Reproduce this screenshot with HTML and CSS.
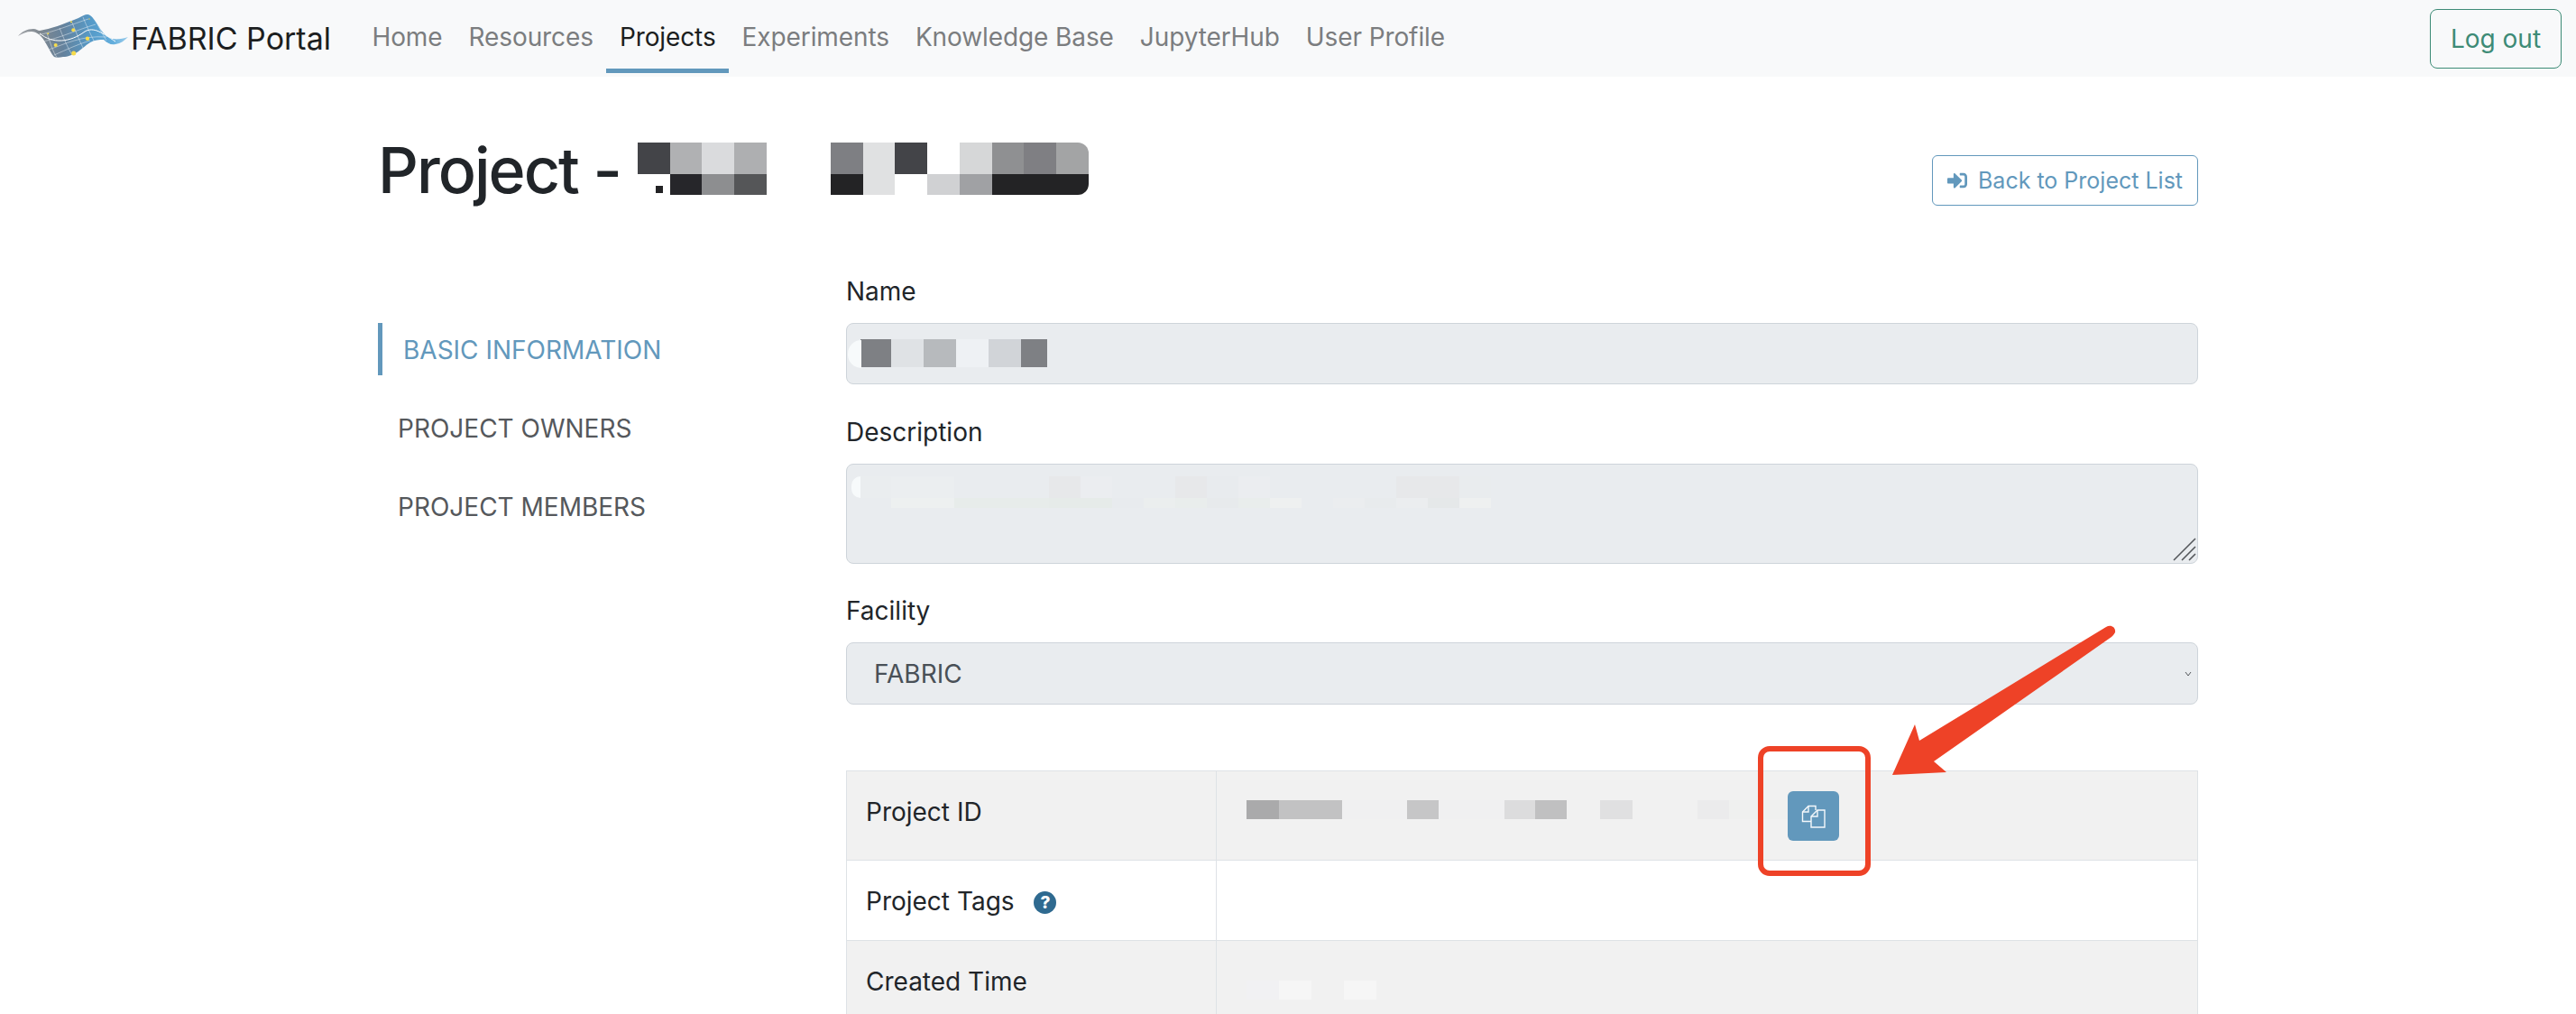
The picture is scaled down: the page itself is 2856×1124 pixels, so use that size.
FILE: index.html
```html
<!DOCTYPE html>
<html lang="en">
  <head>
    <meta charset="UTF-8" />
    <meta name="viewport" content="width=device-width, initial-scale=1.0" />
    <title>FABRIC Portal</title>
    <link rel="stylesheet" href="styles.css">
  </head>
  <body>
    <nav class="navbar">
      <a class="brand" href="#">
        <svg class="logo" viewBox="0 0 124 52" width="124" height="52">
          <defs>
            <linearGradient id="wave" x1="0" y1="0" x2="1" y2="0">
              <stop offset="0" stop-color="#a3a6aa" />
              <stop offset="0.2" stop-color="#7f8890" />
              <stop offset="0.4" stop-color="#65829c" />
              <stop offset="0.65" stop-color="#559ac8" />
              <stop offset="0.85" stop-color="#62aedd" />
              <stop offset="1" stop-color="#a5d2ee" />
            </linearGradient>
            <clipPath id="waveClip">
              <path d="M0 25C4 20 10 17 17 17C20 17 22 19 24 19C36 17 50 12 67 5C71 3 74 1 77 1C81 1 84 6 88 12C92 19 97 26 104 28C110 29 116 28 122 26C118 30 114 33 108 34C103 35 99 33 95 29C90 29 85 29 80 32C74 36 71 39 67 42C60 46 55 48 50 48C46 49 42 49 40 48C37 45 35 40 32 35C29 30 27 26 23 23C20 21 18 20 15 20C9 20 5 22 0 25Z" />
            </clipPath>
          </defs>
          <g clip-path="url(#waveClip)">
            <rect width="124" height="52" fill="url(#wave)" />
            <g fill="none" stroke="#e6eff5" stroke-width="0.5">
              <path d="M22 24C40 20 60 12 78 6" />
              <path d="M28 31C46 27 66 18 86 12" />
              <path d="M34 40C52 34 70 24 98 26" />
              <path d="M40 46C54 40 66 34 80 30" />
              <path d="M32 22C36 32 38 42 44 50" />
              <path d="M46 16C50 26 54 36 60 46" />
              <path d="M60 10C64 20 68 30 72 38" />
              <path d="M72 4C76 14 80 22 84 30" />
              <path d="M84 4C88 12 92 20 98 30" />
            </g>
            <path d="M24 22C38 34 58 32 74 20C84 14 94 22 108 31" fill="none" stroke="#fff" stroke-width="1" />
          </g>
          <g fill="#f6dc4c">
            <circle cx="61.700" cy="44" r="2.500" />
            <circle cx="77" cy="27.700" r="2.200" />
            <circle cx="41.700" cy="35" r="2" />
            <circle cx="61.300" cy="18.300" r="2" />
            <circle cx="33.300" cy="22.300" r="1" />
            <circle cx="59" cy="9.300" r="1" />
            <circle cx="79" cy="6" r="0.700" />
          </g>
        </svg>
        <span>FABRIC Portal</span>
      </a>
      <ul class="nav-links">
        <li><a href="#">Home</a></li>
        <li><a href="#">Resources</a></li>
        <li class="active"><a href="#">Projects</a></li>
        <li><a href="#">Experiments</a></li>
        <li><a href="#">Knowledge Base</a></li>
        <li><a href="#">JupyterHub</a></li>
        <li><a href="#">User Profile</a></li>
      </ul>
      <button class="btn-logout">Log out</button>
    </nav>

    <div class="container">
      <div class="page-header">
        <h1>Project -
          <span class="mosaic mosaic-title">
            <i style="background:#434448"></i><i style="background:#b0b1b3"></i><i style="background:#dadbdd"></i><i style="background:#aeafb1"></i><i class="c-white"></i><i class="c-white"></i><i style="background:#7e7f83"></i><i style="background:#e0e1e2"></i><i style="background:#434448"></i><i class="c-white"></i><i style="background:#d6d7d8"></i><i style="background:#8f9092"></i><i style="background:#7f7f83"></i><i style="background:#a3a4a5"></i>
            <i class="c-white c-dot"></i><i style="background:#26262a"></i><i style="background:#8d8e90"></i><i style="background:#555658"></i><i class="c-white"></i><i class="c-white"></i><i style="background:#232325"></i><i style="background:#e0e1e2"></i><i class="c-white"></i><i style="background:#d0d1d3"></i><i style="background:#a0a1a4"></i><i style="background:#232325"></i><i style="background:#232325"></i><i style="background:#232325"></i>
          </span>
        </h1>
        <button class="btn-back">
          <svg viewBox="0 0 512 512" width="22" height="22" fill="currentColor"><path d="M416 448h-84c-6.6 0-12-5.4-12-12v-40c0-6.6 5.4-12 12-12h84c17.7 0 32-14.3 32-32V160c0-17.7-14.3-32-32-32h-84c-6.6 0-12-5.4-12-12V76c0-6.6 5.4-12 12-12h84c53 0 96 43 96 96v192c0 53-43 96-96 96zm-47-201L201 79c-15-15-41-4.500-41 17v96H24c-13.300 0-24 10.700-24 24v96c0 13.300 10.700 24 24 24h136v96c0 21.500 26 32 41 17l168-168c9.300-9.400 9.300-24.600 0-34z"/></svg>
          Back to Project List
        </button>
      </div>

      <div class="project-layout">
        <ul class="side-menu">
          <li class="active">BASIC INFORMATION</li>
          <li>PROJECT OWNERS</li>
          <li>PROJECT MEMBERS</li>
        </ul>

        <div class="project-form">
          <div class="form-group">
            <label>Name</label>
            <div class="field field-name">
              <span class="mosaic mosaic-name">
                <i style="background:#7e8084"></i><i style="background:#dfe2e5"></i><i style="background:#b7babd"></i><i style="background:#eef1f4"></i><i style="background:#d1d4d8"></i><i style="background:#7e8084"></i>
              </span>
            </div>
          </div>
          <div class="form-group">
            <label>Description</label>
            <div class="field field-desc">
              <span class="mosaic mosaic-desc">
                <i style="background:#eaedef"></i><i style="background:#ebeef0"></i><i style="background:#ebeef0"></i><i></i><i></i><i></i><i style="background:#e7e8ea"></i><i style="background:#ebedf0"></i><i></i><i></i><i style="background:#e7e8ea"></i><i style="background:#e8ebee"></i><i style="background:#ebedf0"></i><i></i><i></i><i></i><i></i><i style="background:#e7e8ea"></i><i style="background:#e7e8ea"></i><i style="background:#e9ecee"></i>
                <i></i><i style="background:#edf0f0"></i><i style="background:#edf0f0"></i><i style="background:#e7ecea"></i><i style="background:#e7ecea"></i><i style="background:#e7ecea"></i><i style="background:#e6ebe9"></i><i style="background:#e6ebe9"></i><i style="background:#e8ebee"></i><i style="background:#ebeeee"></i><i style="background:#e9edec"></i><i style="background:#e7eaec"></i><i style="background:#e9edec"></i><i style="background:#eef0f0"></i><i></i><i style="background:#ebedef"></i><i style="background:#e8ebed"></i><i style="background:#ebedef"></i><i style="background:#e5e8e9"></i><i style="background:#eef0f0"></i>
              </span>
              <svg class="resize-handle" viewBox="0 0 26 26" width="26" height="26" fill="none" stroke="#55585c" stroke-width="1.600">
                <path d="M1 25L25 1M10 25L25 10M18 25L25 18" />
              </svg>
            </div>
          </div>
          <div class="form-group">
            <label>Facility</label>
            <div class="field field-select">
              <span>FABRIC</span>
              <svg viewBox="0 0 8 6" width="8" height="6" fill="none" stroke="#55585c" stroke-width="1"><path d="M1 1L4 5L7 1" /></svg>
            </div>
          </div>

          <table class="info-table">
            <tbody>
              <tr class="row-id">
                <th>Project ID</th>
                <td>
                  <div class="id-cell">
                    <span class="mosaic mosaic-id">
                      <i style="width:36px;background:#aaaaab"></i><i style="width:70px;background:#c2c2c3"></i><i style="width:72px;background:#f0f0f1"></i><i style="width:35px;background:#c6c6c7"></i><i style="width:73px;background:#f0f0f1"></i><i style="width:34px;background:#dcdcdd"></i><i style="width:35px;background:#c0c0c1"></i><i style="width:37px"></i><i style="width:36px;background:#e0e0e1"></i><i style="width:72px"></i><i style="width:35px;background:#ebebec"></i><i style="width:65px;background:#eff0ef"></i>
                    </span>
                    <button class="btn-copy">
                      <svg viewBox="0 0 57 55" width="57" height="55" fill="none" stroke="#f4f8fb" stroke-width="1.400">
                        <path d="M31 21V16.500H23L16.500 23V33.500H26" />
                        <path d="M23 16.500V23H16.500" />
                        <path d="M26 28L33 21H41V40H26Z" />
                        <path d="M33 21V28H26" />
                      </svg>
                    </button>
                  </div>
                </td>
              </tr>
              <tr>
                <th>Project Tags <span class="help-icon">?</span></th>
                <td></td>
              </tr>
              <tr>
                <th>Created Time</th>
                <td>
                  <span class="mosaic mosaic-time">
                    <i style="background:#f1f1f3"></i><i style="background:#f6f6f6"></i><i></i><i style="background:#f6f6f6"></i>
                  </span>
                </td>
              </tr>
            </tbody>
          </table>
        </div>
      </div>
    </div>

    <!-- red markup drawn over the screenshot -->
    <div class="callout-box"></div>
    <svg class="callout-arrow" viewBox="0 0 260 180" width="260" height="180">
      <path d="M8 176L33 120L38 138L245 12C250 9 256 12 255 18C254 20 253 21 251 23L54 161L68 173Z" fill="#ee4227" />
    </svg>
  </body>
</html>
```

FILE: styles.css
```css
html {
  overflow: hidden;
  height: 100%;
}
body {
  font-family: Inter, "Noto Sans", sans-serif;
  font-size: 28px;
  line-height: 42px;
  color: #212529;
  background-color: #fff;
  margin: 0;
  padding: 0;
}
ul {
  list-style: none;
  margin: 0;
  padding: 0;
}
a {
  color: inherit;
  text-decoration: none;
}
button {
  font-family: inherit;
  background: none;
  cursor: pointer;
}

/* navbar */
.navbar {
  height: 85px;
  background-color: #f8f9fa;
  display: flex;
  align-items: center;
  padding: 0 16px 0 20px;
}
.brand {
  display: flex;
  align-items: center;
  font-size: 34px;
  color: #1c1e20;
}
.logo {
  margin: 0 1px 3px 0;
}
.nav-links {
  display: flex;
  margin-left: 31px;
  flex: 1;
  align-self: stretch;
  letter-spacing: -0.1px;
}
.nav-links li {
  height: 70px;
  padding: 6px 14.5px 0;
  display: flex;
  align-items: center;
  color: #7b7d7f;
  border-bottom: 5px solid transparent;
}
.nav-links li.active {
  color: #1c1e20;
  border-bottom-color: #6298bc;
}
.btn-logout {
  width: 146px;
  height: 66px;
  padding: 0;
  font-size: 28px;
  color: #3d8b76;
  border: 1px solid #3d8b76;
  border-radius: 8px;
}

/* page */
.container {
  width: 2018px;
  margin-left: 419px;
}
.page-header {
  height: 217px;
  display: flex;
  justify-content: space-between;
  align-items: flex-start;
}
h1 {
  margin: 0;
  padding-top: 61px;
  font-size: 70px;
  font-weight: 500;
  letter-spacing: -2px;
  line-height: 86px;
  display: flex;
  align-items: flex-start;
  gap: 19px;
}
.btn-back {
  margin-top: 87px;
  width: 295px;
  height: 56px;
  padding: 0;
  display: flex;
  align-items: center;
  justify-content: center;
  gap: 12px;
  font-size: 25px;
  color: #6298bc;
  border: 1px solid #6298bc;
  border-radius: 6px;
}

/* pixelated parts of the picture */
.mosaic {
  display: grid;
}
.mosaic i {
  display: block;
}
.c-white {
  background-color: #fff;
}
.c-dot {
  position: relative;
}
.c-dot::after {
  content: "";
  position: absolute;
  left: 20px;
  top: 13px;
  width: 8px;
  height: 8px;
  background-color: #232325;
}
.mosaic-title {
  margin-top: 12px;
  grid-template-columns: repeat(14, 35.7px);
  grid-template-rows: 35px 23px;
  overflow: hidden;
  border-radius: 0 12px 12px 0;
}
.mosaic-name {
  grid-template-columns: 34px 36px 36px 36px 36px 29px;
  grid-template-rows: 31px;
}
.mosaic-desc {
  grid-template-columns: repeat(20, 35px);
  grid-template-rows: 24px 11px;
}
.mosaic-id {
  display: flex;
  height: 21px;
  margin-top: 10px;
}
.mosaic-time {
  grid-template-columns: repeat(4, 36px);
  grid-template-rows: 21px;
  margin-top: 20px;
}

/* layout below the title */
.project-layout {
  display: grid;
  grid-template-columns: 519px 1499px;
}
.side-menu {
  padding-top: 56px;
  display: flex;
  flex-direction: column;
  gap: 29px;
  color: #55585c;
  font-size: 28px;
}
.side-menu li {
  height: 58px;
  line-height: 60px;
  padding-left: 22px;
}
.side-menu li.active {
  color: #6298bc;
  border-left: 5px solid #6298bc;
  padding-left: 23px;
}

/* form */
.form-group {
  margin-bottom: 31.5px;
}
.form-group label {
  display: block;
  margin-bottom: 14px;
}
.field {
  position: relative;
  box-sizing: border-box;
  background-color: #e9ecef;
  border: 1px solid #ced4da;
  border-radius: 8px;
}
.field-name {
  height: 68px;
  padding: 17px 0 0 15px;
}
.field-name::before {
  content: "";
  position: absolute;
  left: 1px;
  top: 18px;
  width: 15px;
  height: 31px;
  background-color: #f7fafb;
  border-radius: 15px 0 0 15px;
}
.field-desc {
  height: 111px;
  padding: 13px 0 0 14px;
}
.field-desc::before {
  content: "";
  position: absolute;
  left: 5px;
  top: 13px;
  width: 10px;
  height: 24px;
  background-color: #f7fafb;
  border-radius: 10px 0 0 10px;
}
.field-select {
  height: 69px;
  padding: 0 6px 0 30px;
  display: flex;
  align-items: center;
  justify-content: space-between;
  color: #495057;
}
.resize-handle {
  position: absolute;
  right: 1px;
  bottom: 2px;
}

/* info table */
.info-table {
  width: 100%;
  margin-top: 73px;
  border-collapse: collapse;
  table-layout: fixed;
}
.info-table th,
.info-table td {
  border: 1px solid #dee2e6;
  padding: 24px 21px 22px;
  text-align: left;
  vertical-align: top;
  font-weight: 400;
}
.info-table th {
  width: 367px;
}
.info-table td {
  padding-left: 33px;
}
.info-table tr:nth-child(odd) {
  background-color: #f1f1f1;
}
.row-id td {
  padding-top: 22px;
  padding-bottom: 21px;
}
.id-cell {
  display: flex;
  align-items: flex-start;
}
.btn-copy {
  width: 57px;
  height: 55px;
  margin: 0;
  padding: 0;
  display: block;
  background-color: #6298bc;
  border: none;
  border-radius: 6px;
}
.help-icon {
  display: inline-block;
  width: 25px;
  height: 25px;
  margin-left: 14px;
  border-radius: 50%;
  background-color: #2f6a90;
  color: #fff;
  font-size: 19px;
  font-weight: 800;
  line-height: 25px;
  text-align: center;
  vertical-align: 2px;
}

/* annotation on top */
.callout-box {
  position: absolute;
  left: 1949px;
  top: 827px;
  width: 125px;
  height: 144px;
  box-sizing: border-box;
  border: 6px solid #ee4227;
  border-radius: 13px;
}
.callout-arrow {
  position: absolute;
  left: 2090px;
  top: 683px;
}
```
